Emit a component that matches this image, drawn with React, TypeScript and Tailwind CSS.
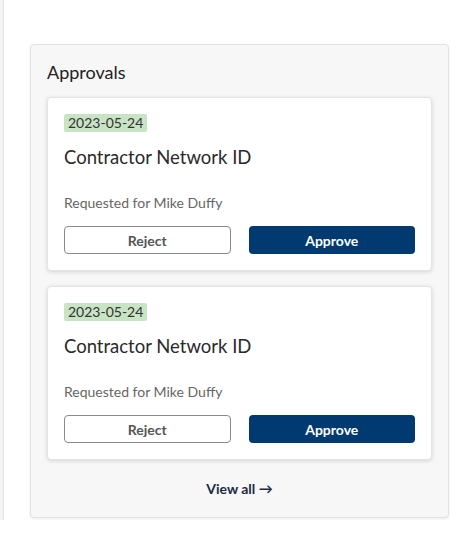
import React from "react";

function ApprovalCard() {
  return (
    <div className="bg-white border border-[#e4e4e4] rounded-[4px] shadow-[0_1px_4px_rgba(0,0,0,0.14)] p-4">
      <div className="flex">
        <span className="bg-[#c8e4c4] text-[#333] text-[14px] leading-[18px] px-[4px] rounded-[2px]">2023-05-24</span>
      </div>
      <div className="mt-[13px] text-[18.5px] leading-[24px] text-[#2a2a2a]">Contractor Network ID</div>
      <div className="mt-[24px] text-[14px] leading-[20px] text-[#666]">Requested for Mike Duffy</div>
      <div className="mt-[13px] grid grid-cols-2 gap-[18px]">
        <button className="h-[28px] border border-[#8a8a8a] rounded-[4px] bg-white text-[14px] font-bold text-[#555]">Reject</button>
        <button className="h-[28px] rounded-[4px] bg-[#013a70] text-[14px] font-bold text-white">Approve</button>
      </div>
    </div>
  );
}

export default function App() {
  return (
    <div className="w-[474px] h-[550px] bg-white flex items-start" style={{ fontFamily: "Lato, 'Open Sans', sans-serif" }}>
      <div className="w-[4px] h-[520px] bg-[#f4f4f4] border-r border-[#e4e4e4] shrink-0" />
      <div className="ml-[26px] mt-[44px] w-[419px] h-[474px] bg-[#f7f7f7] border border-[#e2e2e2] rounded-[4px] shadow-[0_1px_3px_rgba(0,0,0,0.08)] px-4 pt-[15px] flex flex-col">
        <div className="text-[18px] leading-[24px] text-[#222]">Approvals</div>
        <div className="mt-[13px] flex flex-col gap-[15px]">
          <ApprovalCard />
          <ApprovalCard />
        </div>
        <div className="mt-[19px] flex justify-center">
          <span className="text-[14px] leading-[20px] font-bold text-[#1b2a44]">View all →</span>
        </div>
      </div>
    </div>
  );
}
